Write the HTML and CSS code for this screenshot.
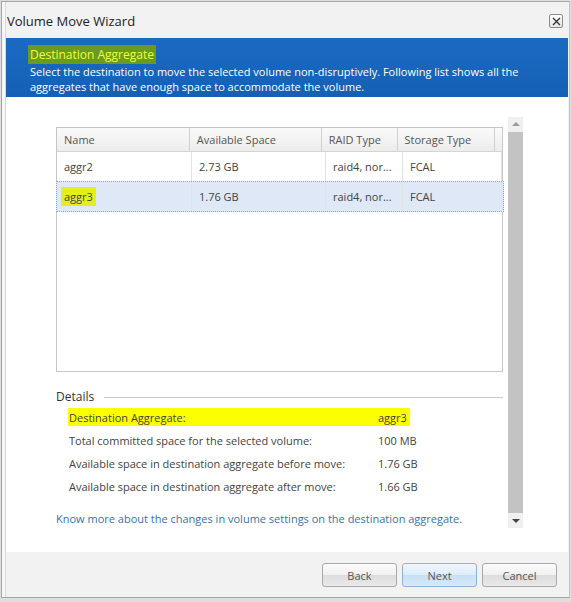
FILE: index.html
```html
<!DOCTYPE html>
<html lang="en">
<head>
    <meta charset="UTF-8">
    <meta name="viewport" content="width=device-width, initial-scale=1.0">
    <title>Volume Move Wizard</title>
    <link rel="stylesheet" href="styles.css">
</head>
<body>

    <div class="window">
        <div class="titlebar">
            <span class="title">Volume Move Wizard</span>
            <button class="close" title="Close">
                <svg width="9" height="9" viewBox="0 0 9 9"><path d="M1 1L8 8M8 1L1 8" stroke="#333" stroke-width="1.3"/></svg>
            </button>
        </div>

        <div class="banner">
            <div class="step-title"><span class="mark-dark">Destination Aggregate</span></div>
            <p>Select the destination to move the selected volume non-disruptively. Following list shows all the aggregates that have enough space to accommodate the volume.</p>
        </div>

        <div class="content">
            <div class="main">
                <div class="grid">
                    <div class="grid-head">
                        <div class="col c-name">Name</div>
                        <div class="col c-space">Available Space</div>
                        <div class="col c-raid">RAID Type</div>
                        <div class="col c-type">Storage Type</div>
                        <div class="col c-pad"></div>
                    </div>
                    <div class="grid-row">
                        <div class="col c-name">aggr2</div>
                        <div class="col c-space">2.73 GB</div>
                        <div class="col c-raid">raid4, nor...</div>
                        <div class="col c-type">FCAL</div>
                    </div>
                    <div class="grid-row selected">
                        <div class="col c-name"><span class="mark">aggr3</span></div>
                        <div class="col c-space">1.76 GB</div>
                        <div class="col c-raid">raid4, nor...</div>
                        <div class="col c-type">FCAL</div>
                    </div>
                </div>

                <div class="details">
                    <div class="legend"><span>Details</span></div>
                    <div class="detail marked">
                        <span class="label">Destination Aggregate:</span>
                        <span class="value">aggr3</span>
                    </div>
                    <div class="detail">
                        <span class="label">Total committed space for the selected volume:</span>
                        <span class="value">100 MB</span>
                    </div>
                    <div class="detail">
                        <span class="label">Available space in destination aggregate before move:</span>
                        <span class="value">1.76 GB</span>
                    </div>
                    <div class="detail">
                        <span class="label">Available space in destination aggregate after move:</span>
                        <span class="value">1.66 GB</span>
                    </div>
                </div>

                <a class="more" href="#">Know more about the changes in volume settings on the destination aggregate.</a>
            </div>

            <div class="vscroll">
                <div class="arrow up"></div>
                <div class="thumb"></div>
                <div class="arrow down"></div>
            </div>
        </div>

        <div class="footer">
            <button class="btn">Back</button>
            <button class="btn primary">Next</button>
            <button class="btn">Cancel</button>
        </div>
    </div>

</body>
</html>
```

FILE: styles.css
```css
body {
    margin: 0;
    background: #dedede;
    font-family: "Open Sans", Arial, sans-serif;
    font-size: 11px;
    color: #444;
}
.window {
    width: 569px;
    height: 597px;
    margin: 1px 0 0 1px;
    border: 1px solid #a6a6a6;
    border-right-color: #c4c4c4;
    box-sizing: border-box;
    background: #f2f2f2;
    display: flex;
    flex-direction: column;
    padding: 0 0 0 4px;
    box-shadow: inset 3px 0 0 #f6f6f6, inset 4px 0 0 #dadada;
}
.titlebar {
    flex-shrink: 0;
    height: 36px;
    display: flex;
    align-items: center;
    justify-content: space-between;
    padding: 0 0 0 1px;
}
.title {
    font-size: 13px;
    color: #222;
    margin-top: 1px;
}
.close {
    width: 14px;
    height: 14px;
    padding: 0;
    margin: 2px 6px 0 0;
    border: 1px solid #8c8c8c;
    border-radius: 2px;
    background: linear-gradient(#fdfdfd, #e6e6e6);
    display: flex;
    align-items: center;
    justify-content: center;
}
.banner {
    flex-shrink: 0;
    height: 59px;
    box-sizing: border-box;
    background: linear-gradient(#1b6ac2, #1460b6);
    color: #fff;
    padding: 8px 20px 0 24px;
    margin-right: 1px;
}
.step-title {
    height: 18px;
    font-size: 12px;
}
.mark-dark {
    background: #6a9a20;
    color: #f0ff3a;
    padding: 1px 2px;
    margin-left: -2px;
}
.banner p {
    margin: 0;
    line-height: 15px;
}
.content {
    flex-shrink: 0;
    height: 455px;
    box-sizing: border-box;
    overflow: hidden;
    background: #fff;
    display: flex;
    padding: 20px 0 24px 50px;
    margin-right: 1px;
}
.main {
    width: 447px;
    padding-top: 10px;
}
.grid {
    height: 245px;
    border: 1px solid #c6c6c6;
    box-sizing: border-box;
}
.grid-head, .grid-row {
    display: flex;
}
.grid-head {
    height: 23px;
    background: linear-gradient(#fafafa, #ececec);
    border-bottom: 1px solid #d4d4d4;
    color: #555;
}
.grid-row {
    height: 29px;
    border-bottom: 1px solid #ececec;
}
.grid-row.selected {
    background: #dfe8f6;
    border: 1px dotted #8fa3c4;
    margin: -1px 0 0 -1px;
    width: 446px;
}
.col {
    display: flex;
    align-items: center;
    padding-left: 7px;
    box-sizing: border-box;
    border-right: 1px solid #e3e3e3;
}
.grid-head .col {
    border-right-color: #d0d0d0;
}
.c-name { width: 135px; }
.c-space { width: 134px; }
.c-raid { width: 77px; }
.c-type { width: 99px; }
.c-pad { flex: 1; border-right: none; }
.mark {
    background: #e3ef1c;
    padding: 2px 3px;
    margin-left: -3px;
}
.details {
    margin-top: 14px;
}
.legend {
    display: flex;
    align-items: center;
    font-size: 12px;
    color: #333;
    height: 20px;
}
.legend::after {
    content: "";
    flex: 1;
    height: 1px;
    background: #c9c9c9;
    margin-left: 10px;
    margin-top: 2px;
}
.detail {
    display: flex;
    height: 23px;
    align-items: center;
    padding-left: 13px;
}
.detail .label {
    width: 309px;
}
.marked {
    background: linear-gradient(transparent 2px, #fbff00 2px, #fbff00 20px, transparent 20px);
    width: 341px;
    margin-left: 12px;
    padding-left: 1px;
}
.more {
    display: block;
    margin-top: 13px;
    line-height: 15px;
    color: #3a72ad;
    text-decoration: none;
}
.vscroll {
    width: 15px;
    margin-left: 5px;
    background: #f0f0f0;
    display: flex;
    flex-direction: column;
}
.arrow {
    height: 15px;
    position: relative;
}
.arrow::after {
    content: "";
    position: absolute;
    left: 4px;
    border-left: 4px solid transparent;
    border-right: 4px solid transparent;
}
.arrow.up::after {
    top: 5px;
    border-bottom: 4px solid #9a9a9a;
}
.arrow.down::after {
    top: 6px;
    border-top: 4px solid #444;
}
.thumb {
    flex: 1;
    background: #c3c3c3;
}
.footer {
    flex: 1;
    display: flex;
    justify-content: flex-end;
    align-items: flex-start;
    gap: 5px;
    padding: 11px 12px 0 0;
    box-sizing: border-box;
}
.btn {
    width: 75px;
    height: 24px;
    font-family: "Open Sans", Arial, sans-serif;
    font-size: 11px;
    color: #555;
    border: 1px solid #a9a9a9;
    border-radius: 3px;
    background: linear-gradient(#fbfbfb, #f1f1f1 50%, #dcdcdc 50%, #e9e9e9);
}
.btn.primary {
    border-color: #8fb2da;
    background: linear-gradient(#eef6fe, #deedfc 50%, #c7dff5 50%, #d8e9fa);
}
```
